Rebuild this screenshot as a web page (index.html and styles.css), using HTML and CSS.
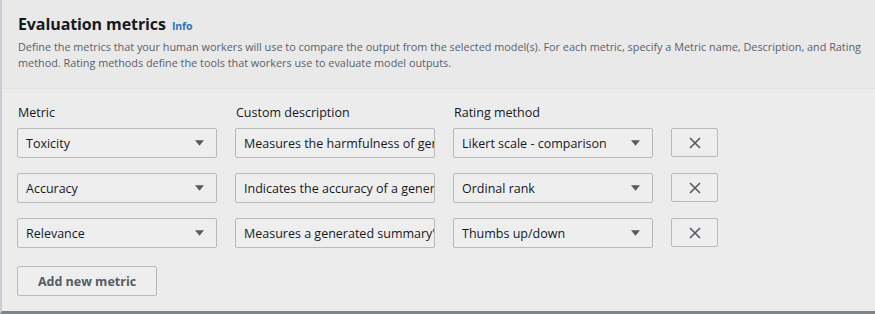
FILE: index.html
```html
<!DOCTYPE html>
<html>
<head>
<meta charset="utf-8">
<link rel="stylesheet" href="styles.css">
</head>
<body>
<div class="panel">
  <div class="header">
    <h2 class="title">Evaluation metrics <a class="info">Info</a></h2>
    <p class="desc">Define the metrics that your human workers will use to compare the output from the selected model(s). For each metric, specify a Metric name, Description, and Rating method. Rating methods define the tools that workers use to evaluate model outputs.</p>
  </div>
  <div class="body">
    <div class="grid labels">
      <div class="label">Metric</div>
      <div class="label">Custom description</div>
      <div class="label">Rating method</div>
    </div>
    <div class="grid rows">
      <div class="select"><span>Toxicity</span><svg class="caret" viewBox="0 0 10 6"><path d="M0 0h10L5 6z"/></svg></div>
      <input class="input" readonly value="Measures the harmfulness of generated content">
      <div class="select"><span>Likert scale - comparison</span><svg class="caret" viewBox="0 0 10 6"><path d="M0 0h10L5 6z"/></svg></div>
      <button class="remove"><svg viewBox="0 0 12 12"><path d="M1 1L11 11M11 1L1 11"/></svg></button>

      <div class="select"><span>Accuracy</span><svg class="caret" viewBox="0 0 10 6"><path d="M0 0h10L5 6z"/></svg></div>
      <input class="input" readonly value="Indicates the accuracy of a generated response">
      <div class="select"><span>Ordinal rank</span><svg class="caret" viewBox="0 0 10 6"><path d="M0 0h10L5 6z"/></svg></div>
      <button class="remove"><svg viewBox="0 0 12 12"><path d="M1 1L11 11M11 1L1 11"/></svg></button>

      <div class="select"><span>Relevance</span><svg class="caret" viewBox="0 0 10 6"><path d="M0 0h10L5 6z"/></svg></div>
      <input class="input" readonly value="Measures a generated summary's relevance">
      <div class="select"><span>Thumbs up/down</span><svg class="caret" viewBox="0 0 10 6"><path d="M0 0h10L5 6z"/></svg></div>
      <button class="remove"><svg viewBox="0 0 12 12"><path d="M1 1L11 11M11 1L1 11"/></svg></button>
    </div>
    <button class="add">Add new metric</button>
  </div>
</div>
</body>
</html>
```
FILE: styles.css
```css
html, body {
  margin: 0;
  padding: 0;
  background: #ececec;
}
body {
  font-family: "Open Sans", "Noto Sans", sans-serif;
  color: #16191f;
}
.panel {
  box-sizing: border-box;
  width: 875px;
  height: 314px;
  background: #ececec;
  border-left: 2px solid #c9ced6;
  border-bottom: 3px solid #7f848b;
}
.header {
  box-sizing: border-box;
  height: 89px;
  padding: 13px 4px 0 16px;
  background: #e9e9e9;
  border-bottom: 1px solid #e1e1e1;
}
.title {
  margin: 0;
  font-size: 16px;
  line-height: 22px;
  font-weight: 700;
  color: #16191f;
  letter-spacing: -0.1px;
}
.info {
  font-size: 10.5px;
  font-weight: 700;
  color: #2a73c0;
  margin-left: 2px;
}
.desc {
  margin: 2px 0 0 0;
  font-size: 10.85px;
  line-height: 16px;
  color: #5a626c;
}
.body {
  padding: 15px 0 0 15px;
}
.grid {
  display: grid;
  grid-template-columns: 200px 200px 200px 47px;
  column-gap: 18px;
}
.labels {
  margin-bottom: 6px;
}
.rows {
  row-gap: 15px;
}
.label {
  font-size: 12.5px;
  line-height: 18px;
  color: #16191f;
  padding-left: 1px;
}
.select, .input {
  box-sizing: border-box;
  height: 30px;
  border: 1px solid #b9b9b9;
  border-radius: 2px;
  background: #eeeeee;
  font-family: "Open Sans", "Noto Sans", sans-serif;
  font-size: 12.5px;
  color: #16191f;
  margin: 0;
  outline: none;
}
.select {
  display: flex;
  align-items: center;
  padding: 0 12px 0 8px;
  justify-content: space-between;
  white-space: nowrap;
}
.input {
  width: 200px;
  padding: 0 0 0 8px;
}
.caret {
  width: 9px;
  height: 6px;
  fill: #545b64;
  flex: none;
}
.remove {
  box-sizing: border-box;
  height: 29px;
  width: 47px;
  border: 1px solid #b9b9b9;
  border-radius: 2px;
  background: #eeeeee;
  padding: 0;
  display: flex;
  align-items: center;
  justify-content: center;
}
.remove svg {
  width: 12px;
  height: 12px;
  stroke: #545b64;
  stroke-width: 1.6;
  fill: none;
}
.add {
  box-sizing: border-box;
  margin-top: 18px;
  height: 30px;
  width: 140px;
  border: 1px solid #b9b9b9;
  border-radius: 2px;
  background: #eeeeee;
  font-family: "Open Sans", "Noto Sans", sans-serif;
  font-weight: 700;
  font-size: 12.5px;
  color: #545b64;
  padding: 0;
}
```
